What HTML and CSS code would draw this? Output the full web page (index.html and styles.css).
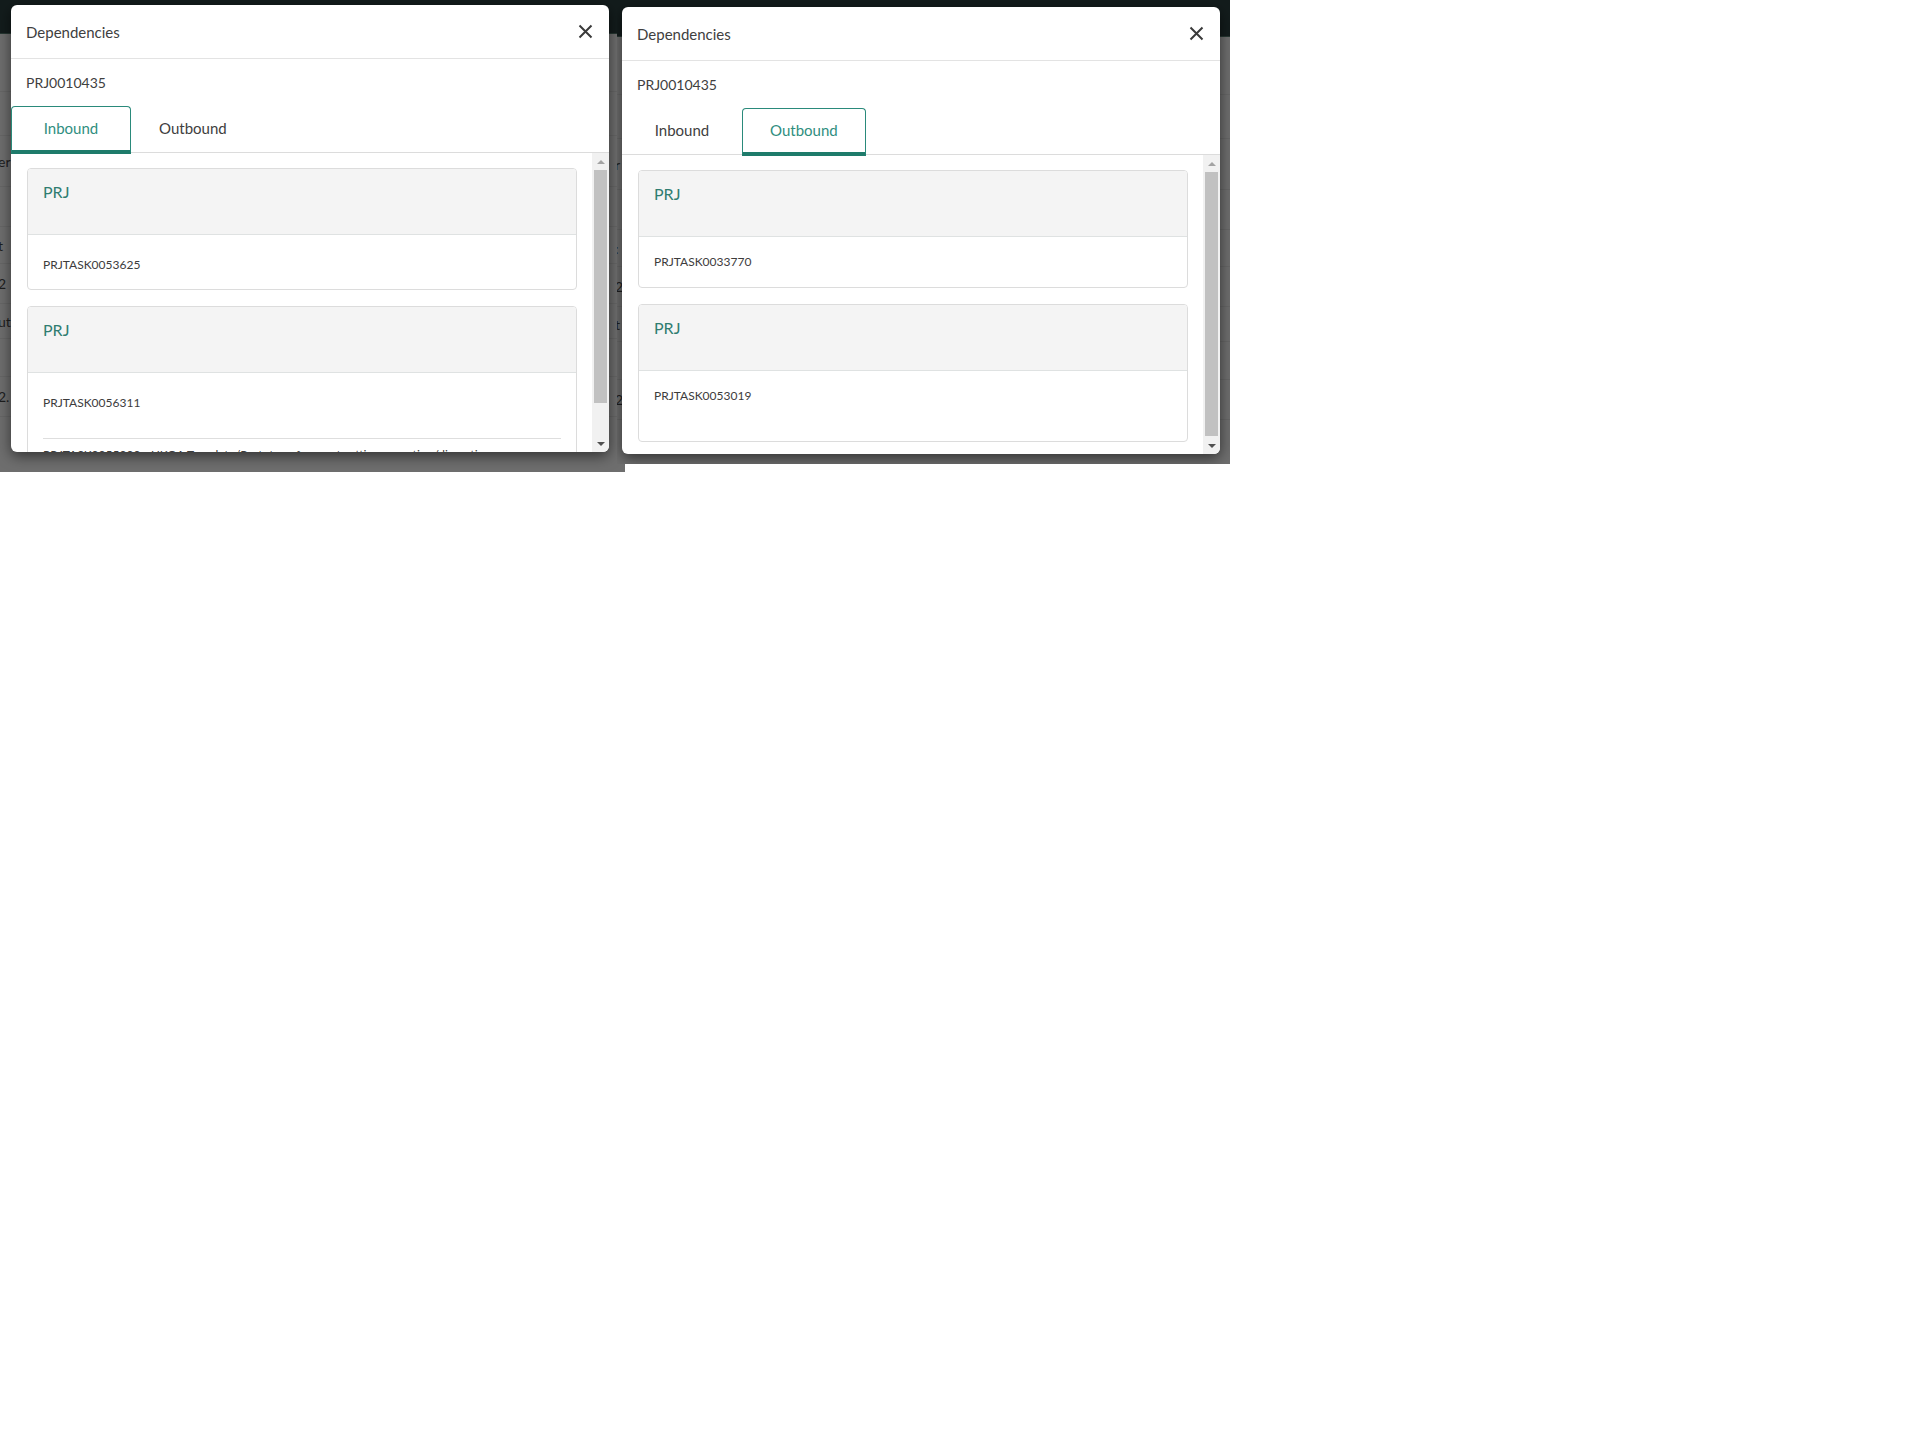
FILE: index.html
```html
<!DOCTYPE html>
<html lang="en">
<head>
<meta charset="utf-8">
<title>Dependencies</title>
<link rel="stylesheet" href="styles.css">
</head>
<body>
<div class="canvas">
  <div class="shot shot-a">
    <div class="page">
      <div class="topbar"></div>
      <div class="row r1"></div>
      <div class="row r2"></div>
      <div class="row r3"><span class="frag">er</span></div>
      <div class="row r4"></div>
      <div class="row r5"><span class="frag">t</span></div>
      <div class="row r6"><span class="frag">2</span></div>
      <div class="row r7"><span class="frag">ut</span></div>
      <div class="row r8"></div>
      <div class="row r9"><span class="frag">2.</span></div>
      <div class="row r10"></div>
    </div>
    <div class="modal modal-a">
      <div class="m-head">
        <span class="m-title">Dependencies</span>
        <span class="m-close"><svg width="15" height="15" viewBox="0 0 15 15"><path d="M1.5 1.5L13.5 13.5M13.5 1.5L1.5 13.5" stroke="#3a3a3a" stroke-width="2" fill="none"/></svg></span>
      </div>
      <div class="m-sub">PRJ0010435</div>
      <div class="tabs">
        <div class="tab active">Inbound</div>
        <div class="tab">Outbound</div>
      </div>
      <div class="m-content">
        <div class="list">
          <div class="card">
            <div class="card-head">PRJ</div>
            <div class="card-body body-a1"><div class="task">PRJTASK0053625</div></div>
          </div>
          <div class="card">
            <div class="card-head">PRJ</div>
            <div class="card-body body-a2">
              <div class="task">PRJTASK0056311</div>
              <div class="task-sep"></div>
              <div class="task task-next">PRJTASK0055000 - UKOA Template/Prototype for asset setting operation/dissection</div>
            </div>
          </div>
        </div>
        <div class="sb">
          <div class="sb-btn"><span class="arr-up"></span></div>
          <div class="sb-track"><div class="sb-thumb thumb-a"></div></div>
          <div class="sb-btn"><span class="arr-down"></span></div>
        </div>
      </div>
    </div>
  </div>

  <div class="shot shot-b">
    <div class="page">
      <div class="topbar topbar-b"></div>
      <div class="row r1"></div>
      <div class="row r2"></div>
      <div class="row r3"><span class="frag">r</span></div>
      <div class="row r4"></div>
      <div class="row r5"><span class="frag">:</span></div>
      <div class="row r6"><span class="frag">2</span></div>
      <div class="row r7"><span class="frag">t</span></div>
      <div class="row r8"></div>
      <div class="row r9"><span class="frag">2</span></div>
      <div class="row r10"></div>
    </div>
    <div class="modal modal-b">
      <div class="m-head">
        <span class="m-title">Dependencies</span>
        <span class="m-close"><svg width="15" height="15" viewBox="0 0 15 15"><path d="M1.5 1.5L13.5 13.5M13.5 1.5L1.5 13.5" stroke="#3a3a3a" stroke-width="2" fill="none"/></svg></span>
      </div>
      <div class="m-sub">PRJ0010435</div>
      <div class="tabs">
        <div class="tab">Inbound</div>
        <div class="tab active">Outbound</div>
      </div>
      <div class="m-content">
        <div class="list">
          <div class="card">
            <div class="card-head">PRJ</div>
            <div class="card-body body-b1"><div class="task">PRJTASK0033770</div></div>
          </div>
          <div class="card">
            <div class="card-head">PRJ</div>
            <div class="card-body body-b2"><div class="task">PRJTASK0053019</div></div>
          </div>
        </div>
        <div class="sb">
          <div class="sb-btn"><span class="arr-up"></span></div>
          <div class="sb-track"><div class="sb-thumb thumb-b"></div></div>
          <div class="sb-btn"><span class="arr-down"></span></div>
        </div>
      </div>
    </div>
  </div>
</div>
</body>
</html>
```
FILE: styles.css
```css
* { box-sizing: border-box; }
html, body { margin: 0; padding: 0; background: #fff; }
body { font-family: "Lato", "Liberation Sans", sans-serif; color: #444; }

.canvas { display: flex; align-items: flex-start; }

.shot { position: relative; overflow: hidden; background: #6e6e6e; }
.shot-a { width: 625px; height: 472px; }
.shot-b { width: 613px; height: 464px; margin-left: -8px; }

.page { display: flex; flex-direction: column; }
.topbar { height: 34px; background: #131c1c; border-bottom: 1px solid #263631; }
.topbar-b { height: 37px; }
.row { border-bottom: 1px solid #676767; display: flex; align-items: center; font-size: 14px; color: #1e1e1e; }
.frag { margin-left: -2px; }
.r1 { height: 58px; }
.r2 { height: 44px; }
.r3 { height: 51px; }
.r4 { height: 40px; }
.r5 { height: 37px; }
.r6 { height: 40px; }
.r7 { height: 35px; }
.r8 { height: 38px; }
.r9 { height: 40px; }
.r10 { height: 60px; }

.modal {
  position: absolute;
  width: 598px;
  height: 447px;
  background: #fff;
  border-radius: 6px;
  overflow: hidden;
  box-shadow: 0 4px 14px rgba(0, 0, 0, 0.55);
  display: flex;
  flex-direction: column;
}
.modal-a { left: 11px; top: 5px; }
.modal-b { left: 5px; top: 7px; }

.m-head {
  height: 54px;
  flex: none;
  border-bottom: 1px solid #e3e3e3;
  display: flex;
  align-items: center;
  justify-content: space-between;
  padding: 0 16px 0 15px;
}
.m-title { font-size: 15px; color: #404040; }
.m-close { width: 15px; height: 15px; display: flex; }

.m-sub { flex: none; height: 47px; padding: 14px 15px 13px; font-size: 14px; line-height: 20px; color: #404040; }

.tabs { flex: none; height: 47px; display: flex; border-bottom: 1px solid #dcdcdc; }
.tab {
  height: 48px;
  margin-bottom: -2px;
  min-width: 120px;
  padding: 11px 27px 12px;
  text-align: center;
  font-size: 15px;
  line-height: 20px;
  color: #404040;
  border: 1px solid transparent;
  border-bottom: 4px solid transparent;
  border-radius: 4px 4px 0 0;
}
.tab.active {
  color: #2f8e80;
  border-color: #2a8a7b;
  border-bottom-color: #1e7b6b;
}

.m-content { flex: 1; display: flex; min-height: 0; }
.list { flex: 1; overflow: hidden; padding: 15px 15px 0 16px; }

.card { border: 1px solid #dcdcdc; border-radius: 4px; overflow: hidden; margin-bottom: 16px; }
.card-head {
  height: 66px;
  background: #f4f4f4;
  border-bottom: 1px solid #dfe2e2;
  padding: 13px 15px 0;
  font-size: 16px;
  line-height: 20px;
  color: #2f7d70;
}
.card-body { padding: 21px 15px 15px; }
.body-a1 { padding: 21px 15px 15px; }
.body-a2 { padding: 21px 15px 0; }
.body-b1 { padding: 16px 15px 16px; }
.body-b2 { padding: 16px 15px 36px; }
.task { font-size: 12px; line-height: 18px; color: #3c3c3c; white-space: nowrap; }
.task-sep { height: 1px; background: #dedede; margin: 26px 0 7px; }

.sb { width: 17px; flex: none; background: #f1f1f1; display: flex; flex-direction: column; }
.sb-btn { height: 17px; flex: none; display: flex; align-items: center; justify-content: center; }
.arr-up { width: 0; height: 0; border-left: 4px solid transparent; border-right: 4px solid transparent; border-bottom: 4px solid #a3a3a3; }
.arr-down { width: 0; height: 0; border-left: 4px solid transparent; border-right: 4px solid transparent; border-top: 4px solid #505050; }
.sb-track { flex: 1; padding: 0 2px; }
.sb-thumb { background: #c1c1c1; }
.thumb-a { height: 233px; }
.thumb-b { height: 264px; }
```
